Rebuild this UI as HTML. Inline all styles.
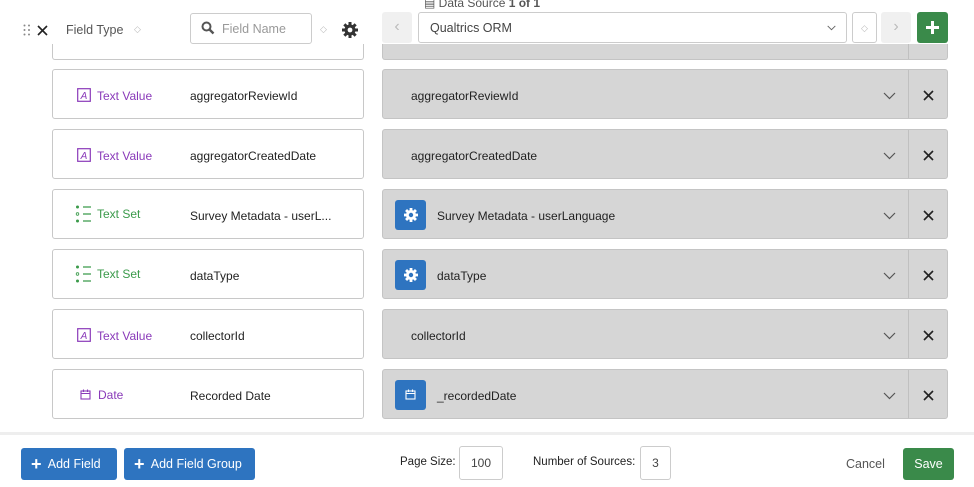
<!DOCTYPE html>
<html><head><style>
*{box-sizing:border-box;margin:0;padding:0}
body{width:974px;height:487px;overflow:hidden;background:#fff;font-family:"Liberation Sans",sans-serif;font-size:12px;color:#222;position:relative}
.a{position:absolute}
.lc{position:absolute;left:52px;width:312px;height:50px;border:1px solid #c8c8c8;border-radius:3px;background:#fff}
.rc{position:absolute;left:382px;width:566px;height:50px;border:1px solid #c4c4c4;border-radius:3px;background:#d6d6d6}
.rc .div{position:absolute;left:525px;top:0;bottom:0;border-left:1px solid #c0c0c0}
.rc .x{position:absolute;left:540px;top:20px}
.rc .chev{position:absolute;left:500px;top:22px}
.type{position:absolute;left:24px;top:18px;font-size:12px}
.nm{position:absolute;left:137px;top:19px}
.rt{position:absolute;top:19px}
.ib{position:absolute;left:12px;top:10px;width:31px;height:30px;background:#2e74c0;border-radius:3px}
.btn{position:absolute;top:448px;height:32px;background:#2e74c0;color:#fff;border-radius:3px;font-size:12.5px;line-height:32px}
.inp{position:absolute;top:446px;height:34px;border:1px solid #ccc;border-radius:3px;text-align:center;line-height:32px;color:#444}
</style></head><body>
<svg width="0" height="0" style="position:absolute"><defs>
<symbol id="x" viewBox="0 0 11 11"><path d="M1 1L10 10M10 1L1 10" stroke="#222" stroke-width="1.6"/></symbol>
<symbol id="ch" viewBox="0 0 13 8"><path d="M1 1l5.5 5.5L12 1" fill="none" stroke="#555" stroke-width="1.2"/></symbol>
<symbol id="gear" viewBox="0 0 16 16"><g fill="#fff"><circle cx="8" cy="8" r="5"/><rect x="6.6" y="1" width="2.8" height="14"/><rect x="1" y="6.6" width="14" height="2.8"/><rect x="6.6" y="1" width="2.8" height="14" transform="rotate(45 8 8)"/><rect x="6.6" y="1" width="2.8" height="14" transform="rotate(-45 8 8)"/></g><circle cx="8" cy="8" r="2.2" fill="#2e74c0"/></symbol>
<symbol id="ts" viewBox="0 0 20 20"><g fill="#3a9a4a" stroke="#3a9a4a"><circle cx="2.5" cy="3" r="1.5" stroke="none"/><circle cx="2.5" cy="10" r="1.3" fill="none" stroke-width="0.8"/><circle cx="2.5" cy="17" r="1.5" stroke="none"/><path d="M8 3h8M8 10h8M8 17h8" stroke-width="1.2"/></g></symbol>
<symbol id="tv" viewBox="0 0 14 14"><rect x="0.7" y="0.7" width="12.6" height="12.6" fill="none" stroke="#8a3ab9" stroke-width="1.2"/><text x="7" y="11" text-anchor="middle" font-size="10" font-style="italic" fill="#8a3ab9" font-family="Liberation Sans">A</text></symbol>
</defs></svg>
<svg class="a" style="left:23px;top:24px" width="8" height="13"><g fill="#888"><circle cx="1.5" cy="1.5" r="1"/><circle cx="6" cy="1.5" r="1"/><circle cx="1.5" cy="6" r="1"/><circle cx="6" cy="6" r="1"/><circle cx="1.5" cy="10.5" r="1"/><circle cx="6" cy="10.5" r="1"/></g></svg>
<svg class="a" style="left:37px;top:25px" width="11" height="11"><use href="#x"/></svg>
<div class="a" style="left:66px;top:23px;color:#555;font-size:12.5px">Field Type</div>
<div class="a" style="left:134px;top:24px;color:#bbb;font-size:9px">◇</div>
<div class="a" style="left:190px;top:13px;width:122px;height:31px;border:1px solid #ccc;border-radius:3px"></div>
<svg class="a" style="left:201px;top:21px" width="14" height="14"><circle cx="5.5" cy="5.5" r="4" fill="none" stroke="#555" stroke-width="2"/><path d="M8.5 8.5l4 4" stroke="#555" stroke-width="2.4"/></svg>
<div class="a" style="left:222px;top:22px;color:#999;font-size:12.5px">Field Name</div>
<div class="a" style="left:320px;top:24px;color:#bbb;font-size:9px">◇</div>
<svg class="a" style="left:341px;top:21px" width="18" height="18"><use href="#gear" style="fill:#333"/><g fill="#333"><circle cx="9" cy="9" r="5.5"/><rect x="7.5" y="1" width="3" height="16"/><rect x="1" y="7.5" width="16" height="3"/><rect x="7.5" y="1" width="3" height="16" transform="rotate(45 9 9)"/><rect x="7.5" y="1" width="3" height="16" transform="rotate(-45 9 9)"/></g><circle cx="9" cy="9" r="2.4" fill="#fff"/></svg>
<div class="a" style="left:424px;top:-4px;color:#555;font-size:12px">▤ Data Source <b>1 of 1</b></div>
<div class="a" style="left:382px;top:12px;width:30px;height:31px;background:#f0f0f0;border-radius:3px;color:#bbb;font-size:16px;text-align:center;line-height:30px">‹</div>
<div class="a" style="left:418px;top:12px;width:429px;height:31px;border:1px solid #ccc;border-radius:3px;padding:8px 11px;color:#444;font-size:12.5px">Qualtrics ORM<svg style="position:absolute;right:10px;top:12px" width="9" height="6" viewBox="0 0 13 8"><path d="M1 1l5.5 5.5L12 1" fill="none" stroke="#666" stroke-width="1.4"/></svg></div>
<div class="a" style="left:852px;top:12px;width:25px;height:31px;border:1px solid #ccc;border-radius:3px;color:#bbb;font-size:9px;text-align:center;line-height:30px">◇</div>
<div class="a" style="left:881px;top:12px;width:30px;height:31px;background:#f0f0f0;border-radius:3px;color:#bbb;font-size:16px;text-align:center;line-height:30px">›</div>
<div class="a" style="left:917px;top:12px;width:31px;height:31px;background:#3a8a4a;border-radius:3px"><svg style="position:absolute;left:8px;top:8px" width="15" height="15"><path d="M7.5 1v13M1 7.5h13" stroke="#fff" stroke-width="3"/></svg></div>
<div class="lc" style="top:44px;height:16px;border-top:none;border-radius:0 0 3px 3px"></div>
<div class="rc" style="top:44px;height:16px;border-top:none;border-radius:0 0 3px 3px"><div class="div"></div></div>

<div class="lc" style="top:69px"><div class="type" style="color:#8a3ab9"><svg width="14" height="14" style="vertical-align:-2px;margin-right:6px"><use href="#tv"/></svg>Text Value</div><div class="nm">aggregatorReviewId</div></div>
<div class="rc" style="top:69px"><div class="rt" style="left:28px">aggregatorReviewId</div><svg class="chev" width="13" height="8"><use href="#ch"/></svg><div class="div"></div><svg class="x" width="11" height="11"><use href="#x"/></svg></div>

<div class="lc" style="top:129px"><div class="type" style="color:#8a3ab9"><svg width="14" height="14" style="vertical-align:-2px;margin-right:6px"><use href="#tv"/></svg>Text Value</div><div class="nm">aggregatorCreatedDate</div></div>
<div class="rc" style="top:129px"><div class="rt" style="left:28px">aggregatorCreatedDate</div><svg class="chev" width="13" height="8"><use href="#ch"/></svg><div class="div"></div><svg class="x" width="11" height="11"><use href="#x"/></svg></div>

<div class="lc" style="top:189px"><div class="type" style="color:#3a9a4a;left:22px;top:14px"><svg width="20" height="20" style="vertical-align:-6px;margin-right:2px"><use href="#ts"/></svg>Text Set</div><div class="nm">Survey Metadata - userL...</div></div>
<div class="rc" style="top:189px"><div class="ib"><svg style="position:absolute;left:8px;top:7px" width="16" height="16"><use href="#gear"/></svg></div><div class="rt" style="left:54px">Survey Metadata - userLanguage</div><svg class="chev" width="13" height="8"><use href="#ch"/></svg><div class="div"></div><svg class="x" width="11" height="11"><use href="#x"/></svg></div>

<div class="lc" style="top:249px"><div class="type" style="color:#3a9a4a;left:22px;top:14px"><svg width="20" height="20" style="vertical-align:-6px;margin-right:2px"><use href="#ts"/></svg>Text Set</div><div class="nm">dataType</div></div>
<div class="rc" style="top:249px"><div class="ib"><svg style="position:absolute;left:8px;top:7px" width="16" height="16"><use href="#gear"/></svg></div><div class="rt" style="left:54px">dataType</div><svg class="chev" width="13" height="8"><use href="#ch"/></svg><div class="div"></div><svg class="x" width="11" height="11"><use href="#x"/></svg></div>

<div class="lc" style="top:309px"><div class="type" style="color:#8a3ab9"><svg width="14" height="14" style="vertical-align:-2px;margin-right:6px"><use href="#tv"/></svg>Text Value</div><div class="nm">collectorId</div></div>
<div class="rc" style="top:309px"><div class="rt" style="left:28px">collectorId</div><svg class="chev" width="13" height="8"><use href="#ch"/></svg><div class="div"></div><svg class="x" width="11" height="11"><use href="#x"/></svg></div>

<div class="lc" style="top:369px"><div class="type" style="color:#8a3ab9;left:27px"><svg width="11" height="11" style="vertical-align:-1px;margin-right:7px"><rect x="1" y="2" width="9" height="8" fill="none" stroke="#8a3ab9" stroke-width="1.1"/><path d="M1 4.5h9M3.5 0.5v2.5M7.5 0.5v2.5" stroke="#8a3ab9" stroke-width="1.1"/></svg>Date</div><div class="nm">Recorded Date</div></div>
<div class="rc" style="top:369px"><div class="ib"><svg style="position:absolute;left:10px;top:9px" width="11" height="11"><rect x="1" y="2" width="9" height="8" fill="none" stroke="#fff" stroke-width="1.1"/><path d="M1 4.5h9M3.5 0.5v2.5M7.5 0.5v2.5" stroke="#fff" stroke-width="1.1"/></svg></div><div class="rt" style="left:54px">_recordedDate</div><svg class="chev" width="13" height="8"><use href="#ch"/></svg><div class="div"></div><svg class="x" width="11" height="11"><use href="#x"/></svg></div>

<div class="a" style="left:0;top:432px;width:974px;height:3px;background:#eee"></div>
<div class="btn" style="left:21px;width:96px;padding-left:10px"><b style="font-size:18px;vertical-align:-2px">+</b>&nbsp; Add Field</div>
<div class="btn" style="left:124px;width:131px;padding-left:10px"><b style="font-size:18px;vertical-align:-2px">+</b>&nbsp; Add Field Group</div>
<div class="a" style="left:400px;top:456px;font-size:11.5px">Page Size:</div>
<div class="inp" style="left:459px;width:44px">100</div>
<div class="a" style="left:533px;top:456px;font-size:11.5px">Number of Sources:</div>
<div class="inp" style="left:640px;width:31px">3</div>
<div class="a" style="left:846px;top:457px;color:#555;font-size:12.5px">Cancel</div>
<div class="btn" style="left:903px;width:51px;background:#3a8a4a;text-align:center">Save</div>
</body></html>
